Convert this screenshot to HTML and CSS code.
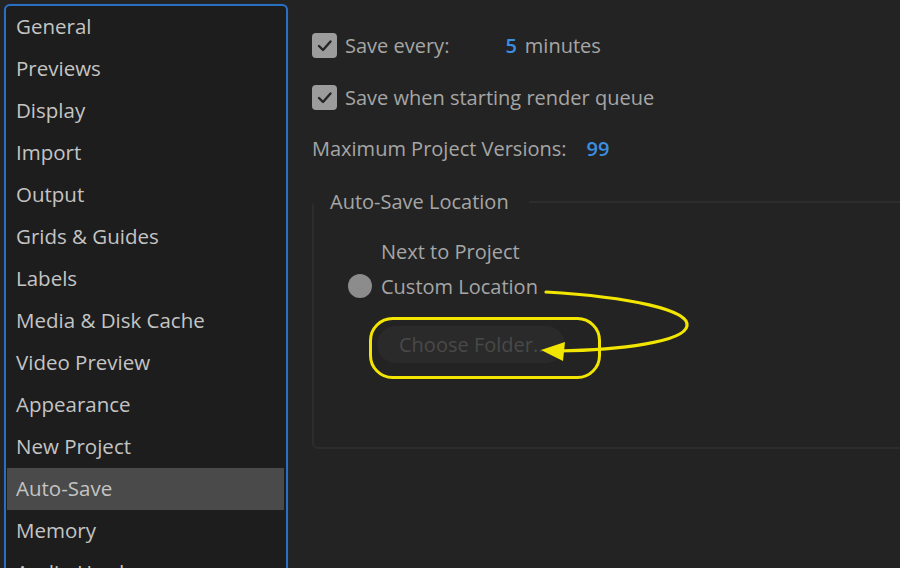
FILE: index.html
```html
<!DOCTYPE html>
<html>
<head>
<meta charset="utf-8">
<link rel="stylesheet" href="styles.css">
</head>
<body>
<div class="app">
  <nav class="sidebar">
    <div class="item">General</div>
    <div class="item">Previews</div>
    <div class="item">Display</div>
    <div class="item">Import</div>
    <div class="item">Output</div>
    <div class="item">Grids &amp; Guides</div>
    <div class="item">Labels</div>
    <div class="item">Media &amp; Disk Cache</div>
    <div class="item">Video Preview</div>
    <div class="item">Appearance</div>
    <div class="item">New Project</div>
    <div class="item selected">Auto-Save</div>
    <div class="item">Memory</div>
    <div class="item">Audio Hardware</div>
  </nav>
  <main class="main">
    <div class="row row-first">
      <span class="checkbox"><svg viewBox="0 0 25 25" width="25" height="25"><path d="M7 13 L11 17 L18.5 8.5" fill="none" stroke="#262626" stroke-width="2.4" stroke-linecap="round" stroke-linejoin="round"/></svg></span>
      <span class="label">Save every:</span>
      <span class="num num-five">5</span>
      <span class="label">minutes</span>
    </div>
    <div class="row row-second">
      <span class="checkbox"><svg viewBox="0 0 25 25" width="25" height="25"><path d="M7 13 L11 17 L18.5 8.5" fill="none" stroke="#262626" stroke-width="2.4" stroke-linecap="round" stroke-linejoin="round"/></svg></span>
      <span class="label">Save when starting render queue</span>
    </div>
    <div class="row row-third">
      <span class="label">Maximum Project Versions:</span>
      <span class="num num-versions">99</span>
    </div>
    <fieldset class="group">
      <legend class="legend">Auto-Save Location</legend>
      <div class="radio-row radio-first">
        <span class="radio radio-off"></span>
        <span class="label">Next to Project</span>
      </div>
      <div class="radio-row radio-second">
        <span class="radio"></span>
        <span class="label">Custom Location</span>
      </div>
      <div class="button">Choose Folder...</div>
    </fieldset>
  </main>
</div>
<svg class="annotation" width="900" height="568" viewBox="0 0 900 568">
  <rect x="370.5" y="318.5" width="229" height="59" rx="22" ry="22" fill="none" stroke="#f2e600" stroke-width="3"/>
  <path d="M546 292 C 630 297, 690 310, 687 326 C 684 342, 620 350, 558 351" fill="none" stroke="#f2e600" stroke-width="3.2" stroke-linecap="round"/>
  <polygon points="541,350 565,342 563,361" fill="#f2e600"/>
</svg>
</body>
</html>
```

FILE: styles.css
```css
html, body {
  margin: 0;
  padding: 0;
}
body {
  width: 900px;
  height: 568px;
  overflow: hidden;
  background: #232323;
  font-family: "Open Sans", "Noto Sans", sans-serif;
  font-size: 20px;
  position: relative;
}
.app {
  display: flex;
  padding: 4px 0 0 4px;
  height: 564px;
}
.sidebar {
  width: 280px;
  height: 620px;
  flex: none;
  background: #1d1d1d;
  border: 2px solid #2b6fc0;
  border-bottom: none;
  border-radius: 6px 6px 0 0;
  box-shadow: 0 0 1px #1f4f8a;
  padding-top: 0;
}
.item {
  height: 42px;
  line-height: 40px;
  padding-left: 9px;
  margin: 0 2px 0 1px;
  color: #c4c4c4;
  font-size: 20.5px;
  white-space: nowrap;
}
.item.selected {
  background: #4a4a4a;
}
.main {
  padding-left: 24px;
  display: flex;
  flex-direction: column;
  flex: 1;
  min-width: 0;
}
.row {
  display: flex;
  align-items: center;
  height: 26px;
  color: #a6a6a6;
}
.row-first { margin-top: 28px; }
.row-second { margin-top: 26px; }
.row-third { margin-top: 25px; }
.checkbox {
  width: 25px;
  height: 25px;
  border-radius: 4px;
  background: #9c9c9c;
  margin-right: 8px;
  flex: none;
  display: flex;
}
.label {
  color: #a6a6a6;
  white-space: nowrap;
}
.num {
  color: #3b8ee2;
  font-weight: 600;
}
.num-five { margin-left: 56px; margin-right: 8px; }
.num-versions { margin-left: 20px; }
.group {
  margin: 28px 0 0 0;
  width: 640px;
  height: 260px;
  border: 2px solid #2d2d2d;
  border-radius: 6px;
  padding: 0 0 0 34px;
  box-sizing: border-box;
}
.legend {
  color: #a6a6a6;
  padding: 0 20px 0 16px;
  margin-left: -34px;
  line-height: 26px;
  white-space: nowrap;
}
.radio-row {
  display: flex;
  align-items: center;
  height: 26px;
}
.radio-first { margin-top: 23px; }
.radio-second { margin-top: 9px; }
.radio {
  width: 24px;
  height: 24px;
  border-radius: 50%;
  background: #8c8c8c;
  margin-right: 9px;
  flex: none;
}
.radio-off {
  background: transparent;
}
.button {
  margin: 27px 0 0 29px;
  width: 188px;
  height: 37px;
  border-radius: 19px;
  background: #2a2a2a;
  color: #494949;
  line-height: 37px;
  padding-left: 22px;
  box-sizing: border-box;
  white-space: nowrap;
}
.annotation {
  position: absolute;
  top: 0;
  left: 0;
  pointer-events: none;
}
```
